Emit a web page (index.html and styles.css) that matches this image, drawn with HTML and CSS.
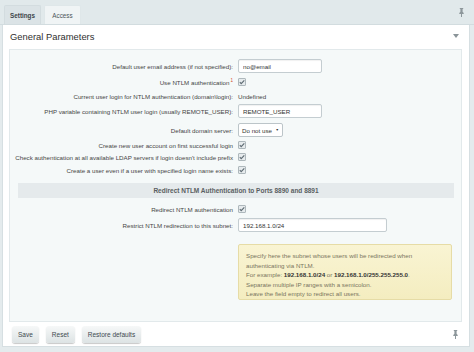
FILE: index.html
```html
<!DOCTYPE html>
<html>
<head>
<meta charset="utf-8">
<link rel="stylesheet" href="styles.css">
</head>
<body>
<div class="tabs">
  <div class="tab tab-active">Settings</div>
  <div class="tab">Access</div>
  <span class="pin pin-top"><svg width="5" height="9" viewBox="0 0 5 9"><path d="M0.8 0h3.4v1h-0.6v2.8l1.1 1.3v0.9h-4.4v-0.9l1.1-1.3v-2.8h-0.6z" fill="#8d979b"/><rect x="2" y="6" width="1" height="3" fill="#8d979b"/></svg></span>
</div>
<div class="panel">
  <div class="panel-head">
    <h1 class="title">General Parameters</h1>
    <span class="caret"></span>
  </div>
  <div class="box">
    <div class="row r1">
      <label class="lbl">Default user email address (if not specified):</label>
      <div class="ctl"><input class="inp inp-s" value="no@email"></div>
    </div>
    <div class="row r2">
      <label class="lbl">Use NTLM authentication<sup class="note">1</sup></label>
      <div class="ctl"><span class="chk"><svg width="8" height="8" viewBox="0 0 8 8"><path d="M1.8 4.1 L3.2 5.6 L6.3 2.3" fill="none" stroke="#5d6a72" stroke-width="1.1"/></svg></span></div>
    </div>
    <div class="row r3">
      <label class="lbl">Current user login for NTLM authentication (domain\login):</label>
      <div class="ctl val">Undefined</div>
    </div>
    <div class="row r4">
      <label class="lbl">PHP variable containing NTLM user login (usually REMOTE_USER):</label>
      <div class="ctl"><input class="inp inp-s" value="REMOTE_USER"></div>
    </div>
    <div class="row r5">
      <label class="lbl">Default domain server:</label>
      <div class="ctl"><span class="sel">Do not use<span class="sel-arrow">&#9660;</span></span></div>
    </div>
    <div class="row r6">
      <label class="lbl">Create new user account on first successful login</label>
      <div class="ctl"><span class="chk"><svg width="8" height="8" viewBox="0 0 8 8"><path d="M1.8 4.1 L3.2 5.6 L6.3 2.3" fill="none" stroke="#5d6a72" stroke-width="1.1"/></svg></span></div>
    </div>
    <div class="row r7">
      <label class="lbl">Check authentication at all available LDAP servers if login doesn't include prefix</label>
      <div class="ctl"><span class="chk"><svg width="8" height="8" viewBox="0 0 8 8"><path d="M1.8 4.1 L3.2 5.6 L6.3 2.3" fill="none" stroke="#5d6a72" stroke-width="1.1"/></svg></span></div>
    </div>
    <div class="row r8">
      <label class="lbl">Create a user even if a user with specified login name exists:</label>
      <div class="ctl"><span class="chk"><svg width="8" height="8" viewBox="0 0 8 8"><path d="M1.8 4.1 L3.2 5.6 L6.3 2.3" fill="none" stroke="#5d6a72" stroke-width="1.1"/></svg></span></div>
    </div>
    <div class="band">Redirect NTLM Authentication to Ports 8890 and 8891</div>
    <div class="row r9">
      <label class="lbl">Redirect NTLM authentication</label>
      <div class="ctl"><span class="chk"><svg width="8" height="8" viewBox="0 0 8 8"><path d="M1.8 4.1 L3.2 5.6 L6.3 2.3" fill="none" stroke="#5d6a72" stroke-width="1.1"/></svg></span></div>
    </div>
    <div class="row r10">
      <label class="lbl">Restrict NTLM redirection to this subnet:</label>
      <div class="ctl"><input class="inp inp-l" value="192.168.1.0/24"></div>
    </div>
    <div class="row r11">
      <span class="lbl"></span>
      <div class="hint">
        Specify here the subnet whose users will be redirected when<br>
        authenticating via NTLM.<br>
        For example: <b>192.168.1.0/24</b> or <b>192.168.1.0/255.255.255.0</b>.<br>
        Separate multiple IP ranges with a semicolon.<br>
        Leave the field empty to redirect all users.
      </div>
    </div>
  </div>
  <div class="footer">
    <button class="btn">Save</button>
    <button class="btn">Reset</button>
    <button class="btn">Restore defaults</button>
    <span class="pin pin-bottom"><svg width="5" height="9" viewBox="0 0 5 9"><path d="M0.8 0h3.4v1h-0.6v2.8l1.1 1.3v0.9h-4.4v-0.9l1.1-1.3v-2.8h-0.6z" fill="#8d979b"/><rect x="2" y="6" width="1" height="3" fill="#8d979b"/></svg></span>
  </div>
</div>
</body>
</html>
```

FILE: styles.css
```css
html, body {
  margin: 0;
  padding: 0;
}
body {
  width: 474px;
  height: 352px;
  overflow: hidden;
  background: #e4ebed;
  font-family: "Liberation Sans", Arial, sans-serif;
  color: #444;
}
.tabs {
  height: 25px;
  box-sizing: border-box;
  display: flex;
  align-items: flex-end;
  gap: 3px;
  padding: 0 8px 0 4px;
  background: #e1e9eb;
  border-bottom: 1px solid #d2dcdf;
}
.tab {
  width: 37px;
  height: 19px;
  box-sizing: border-box;
  display: flex;
  align-items: center;
  justify-content: center;
  font-size: 6.3px;
  color: #4b555a;
  background: #f0f4f5;
  border: 1px solid #dfe7e9;
  border-bottom: none;
  border-radius: 2px 2px 0 0;
}
.tab-active {
  background: #dbe3e6;
  border-color: #d3dcdf;
  font-weight: bold;
  color: #3b4448;
}
.pin {
  display: flex;
}
.pin-top {
  margin-left: auto;
  align-self: center;
  margin-right: 2px;
}
.panel {
  margin-left: 2px;
  width: 468px;
  height: 322px;
  box-sizing: border-box;
  background: #fff;
  border: 1px solid #d6dfe2;
  border-top: none;
}
.panel-head {
  height: 24px;
  display: flex;
  align-items: center;
  padding: 0 10px 2px 7px;
  box-sizing: border-box;
}
.title {
  margin: 0;
  font-size: 9.4px;
  font-weight: normal;
  color: #2f2f2f;
}
.caret {
  margin-left: auto;
  width: 0;
  height: 0;
  border-left: 3.5px solid transparent;
  border-right: 3.5px solid transparent;
  border-top: 4px solid #8a9498;
}
.box {
  margin-left: 6px;
  width: 453px;
  height: 273px;
  box-sizing: border-box;
  background: #f5f9f9;
  border: 1px solid #e2e9eb;
  padding-top: 9px;
}
.row {
  display: grid;
  grid-template-columns: 223px 1fr;
  column-gap: 5px;
  align-items: center;
  height: 12px;
}
.lbl {
  text-align: right;
  font-size: 6.2px;
  color: #454545;
  white-space: nowrap;
}
.note {
  color: #d2472c;
  font-size: 4.5px;
  vertical-align: top;
  line-height: 1;
  margin-left: 1px;
}
.ctl {
  display: flex;
  align-items: center;
}
.val {
  font-size: 6.2px;
  color: #454545;
}
.r1 { height: 14px; }
.r2 { margin-top: 3px; }
.r3 { margin-top: 2px; }
.r4 { margin-top: 2px; height: 14px; }
.r5 { margin-top: 5px; height: 14px; }
.r6 { margin-top: 2px; }
.r7 { margin-top: 0; }
.r8 { margin-top: 1px; }
.r9 { margin-top: 5px; }
.r10 { margin-top: 3px; height: 14px; }
.r11 { margin-top: 12px; height: auto; align-items: start; }
.inp {
  height: 14px;
  box-sizing: border-box;
  border: 1px solid #c4cdd1;
  border-radius: 2px;
  background: #fff;
  padding: 0 4px;
  font-family: "Liberation Sans", Arial, sans-serif;
  font-size: 6.2px;
  color: #333;
  box-shadow: inset 0 1px 1px rgba(0,0,0,0.06);
  outline: none;
}
.inp-s { width: 84px; }
.inp-l { width: 149px; }
.chk {
  width: 8px;
  height: 8px;
  box-sizing: border-box;
  border: 1px solid #aeb8bc;
  border-radius: 1px;
  background: #e6ebed;
  display: flex;
  align-items: center;
  justify-content: center;
}
.chk svg {
  margin: -1px;
}
.sel {
  width: 45px;
  height: 14px;
  box-sizing: border-box;
  border: 1px solid #bcc5c9;
  border-radius: 2px;
  background: #fff;
  display: flex;
  align-items: center;
  padding-left: 3px;
  font-size: 6.2px;
  color: #333;
  white-space: nowrap;
}
.sel-arrow {
  margin-left: auto;
  margin-right: 3px;
  font-size: 3.5px;
  color: #333;
}
.band {
  margin: 7px 7px 0 8px;
  height: 15px;
  background: #e5eaec;
  display: flex;
  align-items: center;
  justify-content: center;
  font-size: 6.5px;
  font-weight: bold;
  color: #5a5f62;
}
.hint {
  width: 214px;
  height: 56px;
  box-sizing: border-box;
  background: linear-gradient(#f9f4d3, #f4edc0);
  border: 1px solid #e6dca6;
  border-radius: 2px;
  padding: 6px 0 0 7px;
  font-size: 6.2px;
  line-height: 9.5px;
  color: #7a7560;
}
.hint b {
  color: #343434;
  font-weight: bold;
}
.footer {
  display: flex;
  align-items: center;
  padding: 4px 11px 0 9px;
  gap: 7px;
}
.btn {
  height: 17px;
  border: none;
  border-radius: 3px;
  background: linear-gradient(#f6f8f8, #dde3e4);
  box-shadow: 0 1px 1px rgba(0,0,0,0.22);
  font-family: "Liberation Sans", Arial, sans-serif;
  font-size: 6.5px;
  color: #3e4a50;
  padding: 0 6px;
}
.pin-bottom {
  margin-left: auto;
}
```
